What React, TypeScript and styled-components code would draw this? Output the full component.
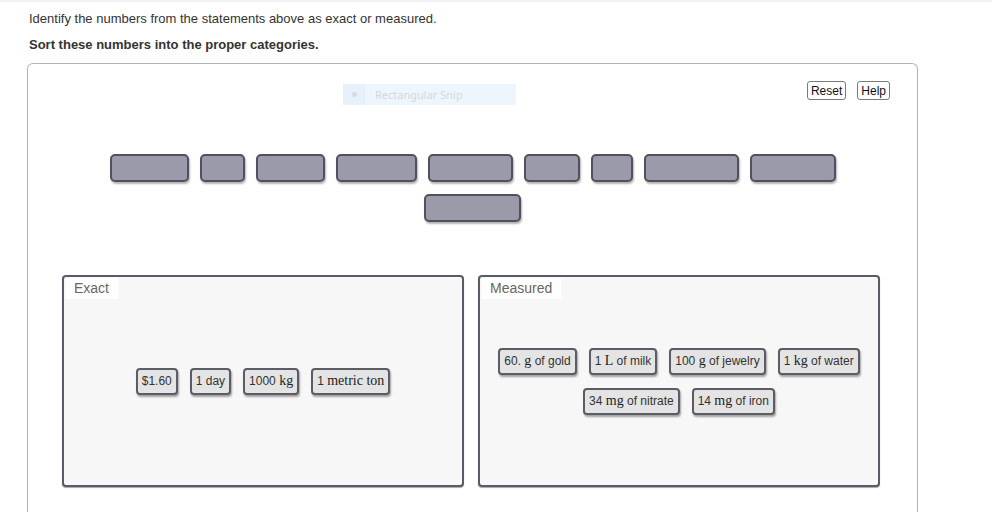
import React from "react";
import styled, { createGlobalStyle } from "styled-components";

const GlobalStyle = createGlobalStyle`
  html, body {
    margin: 0;
    background: #fff;
  }
  body {
    font-family: "Liberation Sans", Arial, sans-serif;
    color: #333;
  }
`;

const Page = styled.div`
  border-top: 2px solid #f1f1f1;
  padding: 8px 0 0 27px;
  height: 512px;
  overflow: hidden;
  box-sizing: border-box;
`;

const Prompt = styled.p<{ $bold?: boolean }>`
  margin: 0 0 0 2px;
  font-size: 13px;
  line-height: 18px;
  font-weight: ${(p) => (p.$bold ? "bold" : "normal")};
  & + & {
    margin-top: 8px;
  }
`;

const Workspace = styled.div`
  position: relative;
  margin-top: 9px;
  width: 891px;
  height: 470px;
  box-sizing: border-box;
  border: 1px solid #b4b4b4;
  border-bottom: none;
  border-radius: 6px 6px 0 0;
`;

const Controls = styled.div`
  display: flex;
  justify-content: flex-end;
  gap: 11px;
  padding: 17px 27px 0 0;
`;

const ControlButton = styled.button`
  height: 19px;
  padding: 0 3px;
  border: 1px solid #7a7a7a;
  border-radius: 3px;
  background: #fff;
  color: #111;
  font-family: "Liberation Sans", Arial, sans-serif;
  font-size: 12px;
  line-height: 16px;
`;

const SnipHint = styled.div`
  position: absolute;
  left: 315px;
  top: 20px;
  width: 173px;
  height: 21px;
  display: flex;
  align-items: center;
  background: #eef6fd;
  font-family: "Noto Sans", "Open Sans", sans-serif;
  font-size: 11px;
  color: #d4d6d9;
`;

const SnipIcon = styled.span`
  width: 22px;
  height: 21px;
  margin-right: 10px;
  display: flex;
  align-items: center;
  justify-content: center;
  background: #e6f1fb;
  &::before {
    content: "";
    width: 5px;
    height: 5px;
    border-radius: 50%;
    background: #d9dbde;
  }
`;

const SlotTray = styled.div`
  display: flex;
  flex-wrap: wrap;
  justify-content: center;
  gap: 12px 11px;
  max-width: 760px;
  margin: 54px auto 0;
`;

const Slot = styled.div<{ $w: number }>`
  width: ${(p) => p.$w}px;
  height: 28px;
  box-sizing: border-box;
  background: #9b9aab;
  border: 2px solid #51515e;
  border-radius: 5px;
  box-shadow: 1px 2px 2px rgba(0, 0, 0, 0.3);
`;

const Categories = styled.div`
  display: grid;
  grid-template-columns: 402px 402px;
  gap: 14px;
  margin: 53px 0 0 34px;
`;

const Category = styled.div`
  position: relative;
  height: 212px;
  box-sizing: border-box;
  background: #f7f7f7;
  border: 2px solid #5a5a68;
  border-radius: 4px;
  box-shadow: 0 1px 1px rgba(0, 0, 0, 0.35);
  display: flex;
  align-items: center;
  justify-content: center;
`;

const CategoryLabel = styled.span`
  position: absolute;
  left: 2px;
  top: 1px;
  padding: 0 9px 0 8px;
  height: 21px;
  line-height: 21px;
  background: #fff;
  font-size: 14px;
  color: #666;
`;

const ChipArea = styled.div`
  display: flex;
  flex-wrap: wrap;
  justify-content: center;
  align-content: center;
  gap: 13px 12px;
  max-width: 372px;
`;

const Chip = styled.div`
  height: 27px;
  box-sizing: border-box;
  padding: 0 4px;
  display: flex;
  align-items: center;
  background: #e4e4e4;
  border: 2px solid #5c5c66;
  border-radius: 4px;
  box-shadow: 1px 2px 2px rgba(0, 0, 0, 0.35);
  font-size: 12px;
  color: #333;
  white-space: pre;
`;

const Unit = styled.span`
  font-family: "Liberation Serif", "Times New Roman", serif;
  font-size: 14px;
  color: #222;
`;

const slotWidths = [79, 45, 69, 81, 85, 56, 42, 95, 86, 97];

type ChipItem = { pre: string; unit?: string; post?: string };

const exact: ChipItem[] = [
  { pre: "$1.60" },
  { pre: "1 day" },
  { pre: "1000 ", unit: "kg" },
  { pre: "1 ", unit: "metric ton" },
];

const measured: ChipItem[] = [
  { pre: "60. ", unit: "g", post: " of gold" },
  { pre: "1 ", unit: "L", post: " of milk" },
  { pre: "100 ", unit: "g", post: " of jewelry" },
  { pre: "1 ", unit: "kg", post: " of water" },
  { pre: "34 ", unit: "mg", post: " of nitrate" },
  { pre: "14 ", unit: "mg", post: " of iron" },
];

const renderChips = (items: ChipItem[]) =>
  items.map((c, i) => (
    <Chip key={i}>
      {c.pre}
      {c.unit && <Unit>{c.unit}</Unit>}
      {c.post}
    </Chip>
  ));

export default function App() {
  return (
    <>
      <GlobalStyle />
      <Page>
        <Prompt>Identify the numbers from the statements above as exact or measured.</Prompt>
        <Prompt $bold>Sort these numbers into the proper categories.</Prompt>
        <Workspace>
          <Controls>
            <ControlButton>Reset</ControlButton>
            <ControlButton>Help</ControlButton>
          </Controls>
          <SnipHint>
            <SnipIcon />
            Rectangular Snip
          </SnipHint>
          <SlotTray>
            {slotWidths.map((w, i) => (
              <Slot key={i} $w={w} />
            ))}
          </SlotTray>
          <Categories>
            <Category>
              <CategoryLabel>Exact</CategoryLabel>
              <ChipArea>{renderChips(exact)}</ChipArea>
            </Category>
            <Category>
              <CategoryLabel>Measured</CategoryLabel>
              <ChipArea>{renderChips(measured)}</ChipArea>
            </Category>
          </Categories>
        </Workspace>
      </Page>
    </>
  );
}
